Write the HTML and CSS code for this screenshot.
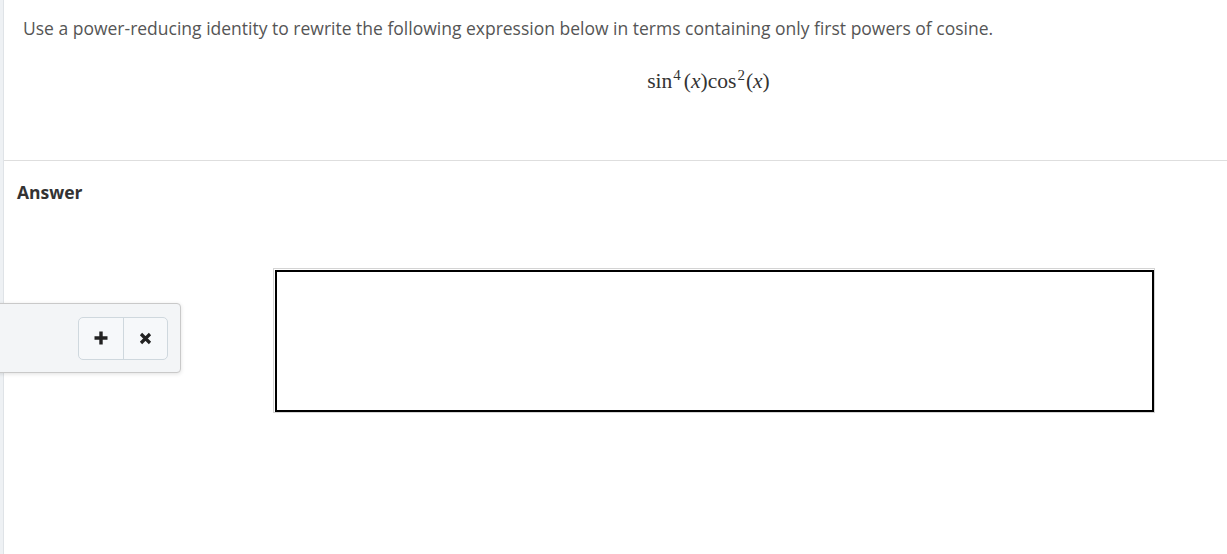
FILE: index.html
```html
<!DOCTYPE html>
<html lang="en">
<head>
  <meta charset="UTF-8">
  <meta name="viewport" content="width=device-width, initial-scale=1.0">
  <title>Power-reducing identity</title>
  <link rel="stylesheet" href="styles.css">
</head>
<body>
  <div class="frame">
    <div class="content">
      <div class="question">
        <p class="prompt">Use a power-reducing identity to rewrite the following expression below in terms containing only first powers of cosine.</p>
        <div class="math">sin<sup class="sup-wide">4</sup>(<i>x</i>)cos<sup>2</sup>(<i>x</i>)</div>
      </div>

      <div class="answer-section">
        <h2 class="answer-label">Answer</h2>
        <div class="answer-row">
          <div class="toolbar">
            <div class="btn-group">
              <button type="button" class="tool-btn" aria-label="Add">
                <svg width="16" height="16" viewBox="0 0 16 16"><path d="M8 1.5v13M1.5 8h13" stroke="#222" stroke-width="3.4"/></svg>
              </button>
              <button type="button" class="tool-btn" aria-label="Clear">
                <svg width="13" height="13" viewBox="0 0 13 13"><path d="M2 2l9 9M11 2l-9 9" stroke="#222" stroke-width="3.2"/></svg>
              </button>
            </div>
          </div>
          <div class="answer-box">
            <div class="answer-input"></div>
          </div>
        </div>
      </div>
    </div>
  </div>
</body>
</html>
```

FILE: styles.css
```css
body {
  margin: 0;
  font-family: "Open Sans", "Liberation Sans", Arial, sans-serif;
  background-color: #fff;
  color: #555;
}
.frame {
  min-height: 554px;
  border-left: 3px solid #eef1f4;
}
.content {
  min-height: 554px;
  border-left: 1px solid #dfe3e7;
}
.question {
  height: 161px;
  box-sizing: border-box;
  border-bottom: 1px solid #dedede;
  padding: 16px 19px 0;
}
.prompt {
  margin: 0;
  font-size: 17.5px;
  line-height: 25px;
  color: #555;
}
.math {
  margin-top: 25px;
  padding-left: 186px;
  text-align: center;
  font-family: "Liberation Serif", "Times New Roman", serif;
  font-size: 21.5px;
  line-height: 30px;
  color: #333;
}
.math sup {
  font-size: 15px;
  line-height: 0;
  vertical-align: 0.55em;
  margin: 0 1px 0 1px;
}
.math .sup-wide {
  margin-right: 3px;
}
.answer-section {
  padding: 19px 13px 0;
}
.answer-label {
  margin: 0;
  font-size: 17.5px;
  line-height: 24px;
  font-weight: 700;
  color: #333;
}
.answer-row {
  display: flex;
  align-items: center;
  margin-top: 64px;
}
.toolbar {
  flex-shrink: 0;
  margin-left: -30px;
  width: 180px;
  height: 68px;
  background: #f3f5f7;
  border: 1px solid #c9c9c9;
  border-radius: 4px;
  box-shadow: 0 1px 4px rgba(0, 0, 0, 0.12);
  display: flex;
  justify-content: flex-end;
  align-items: center;
  padding-right: 12px;
  box-sizing: content-box;
  margin-top: -5px;
}
.btn-group {
  display: flex;
  border: 1px solid #cfd8de;
  border-radius: 5px;
  background: #f6f8fa;
  overflow: hidden;
}
.tool-btn {
  width: 44px;
  height: 41px;
  border: none;
  background: transparent;
  padding: 0;
  display: flex;
  align-items: center;
  justify-content: center;
  cursor: pointer;
}
.tool-btn + .tool-btn {
  border-left: 1px solid #cfd8de;
}
.answer-box {
  flex-shrink: 0;
  margin-left: 92px;
  width: 879px;
  height: 142px;
  border: 1px solid #d4d4d4;
  padding: 1px 0 0 1px;
  box-sizing: content-box;
}
.answer-input {
  height: 100%;
  box-sizing: border-box;
  border: 2px solid #000;
}
```
